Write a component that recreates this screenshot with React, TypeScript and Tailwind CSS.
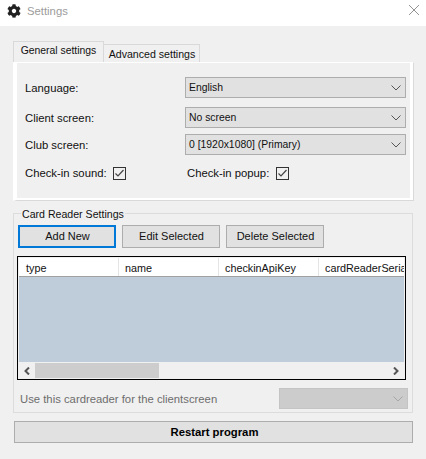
import { FaCog } from "react-icons/fa";

function Chevron({ className }: { className: string }) {
  return (
    <svg width="10" height="6" viewBox="0 0 10 6" fill="none" className={className}>
      <path d="M0.5 0.5L5 5L9.5 0.5" stroke="currentColor" strokeWidth="1" />
    </svg>
  );
}

function ComboBox({ value }: { value: string }) {
  return (
    <div className="flex h-[21px] w-[221px] items-center justify-between border border-[#adadad] bg-[#e1e1e1] pl-[3px] pr-[4px] text-[10.4px]">
      <span className="mt-px">{value}</span>
      <Chevron className="text-[#555555]" />
    </div>
  );
}

function CheckBox() {
  return (
    <span className="flex h-[13px] w-[13px] items-center justify-center border border-[#333333] bg-[#f0f0f0]">
      <svg width="11" height="11" viewBox="0 0 11 11" fill="none">
        <path d="M1.5 5.5L4 8L9.5 2" stroke="#444444" strokeWidth="1.2" />
      </svg>
    </span>
  );
}

function Button({ label, focused }: { label: string; focused?: boolean }) {
  return (
    <div
      className={`flex h-[23px] w-[98px] items-center justify-center bg-[#e1e1e1] pb-px pl-px text-[11px] ${
        focused ? "border-2 border-[#0078d7]" : "border border-[#adadad]"
      }`}
    >
      {label}
    </div>
  );
}

const columns = ["type", "name", "checkinApiKey", "cardReaderSerial"];

export default function App() {
  return (
    <div className="h-[459px] w-[426px] overflow-hidden bg-[#f0f0f0] text-[11.3px] leading-[14px] text-[#111111] [font-family:'Liberation_Sans',Arial,sans-serif]">
      <div className="flex h-[26px] items-center justify-between bg-white pb-[4px] pl-[7px] pr-[7px]">
        <div className="flex items-center gap-[6px]">
          <FaCog className="h-[14px] w-[14px] text-[#222222]" />
          <span className="text-[#9c9c9c]">Settings</span>
        </div>
        <svg width="10" height="10" viewBox="0 0 10 10" fill="none" className="mb-[2px]">
          <path d="M0 0L10 10M10 0L0 10" stroke="#777777" strokeWidth="0.8" />
        </svg>
      </div>

      <div className="px-[13px]">
        <div className="mt-[15px] flex h-[21px] items-end">
          <div className="relative z-10 flex h-[21px] w-[91px] items-center justify-center whitespace-nowrap border border-b-0 border-[#d9d9d9] bg-[#f0f0f0] pb-[2px] text-[10.4px]">
            General settings
          </div>
          <div className="flex h-[18px] w-[96px] items-center justify-center whitespace-nowrap border border-l-0 border-b-0 border-[#d9d9d9] bg-[#f0f0f0] pl-px text-[10.6px]">
            Advanced settings
          </div>
        </div>
        <div className="flex h-[139px] w-[401px] flex-col border-[#d9d9d9] border-r-[1px] border-b-[1px] border-l-[4px] border-l-white border-t-[1px] border-t-white pl-[8px] pr-[7px] pt-[14px] shadow-[inset_-3px_-2px_0_#ffffff]">
          <div className="mb-[9px] flex items-center justify-between">
            <span>Language:</span>
            <ComboBox value="English" />
          </div>
          <div className="mb-[6px] flex items-center justify-between">
            <span>Client screen:</span>
            <ComboBox value="No screen" />
          </div>
          <div className="flex items-center justify-between">
            <span>Club screen:</span>
            <ComboBox value="0 [1920x1080] (Primary)" />
          </div>
          <div className="mt-[11px] flex items-center">
            <span className="mb-px w-[88px]">Check-in sound:</span>
            <CheckBox />
            <span className="mb-px ml-[61px] w-[89px]">Check-in popup:</span>
            <CheckBox />
          </div>
        </div>

        <div className="relative mt-[12px] h-[200px] w-[400px] border border-[#dcdcdc] pl-[4px] pt-[11px]">
          <span className="absolute left-[7px] top-[-7px] bg-[#f0f0f0] px-[1px] text-[10.6px]">Card Reader Settings</span>
          <div className="flex gap-[6px]">
            <Button label="Add New" focused />
            <Button label="Edit Selected" />
            <Button label="Delete Selected" />
          </div>

          <div className="ml-[-1px] mt-[8px] h-[124px] w-[389px] border border-black p-px">
            <div className="flex h-[19px] border-b border-[#a0a0a0] bg-white">
              {columns.map((column) => (
                <div
                  key={column}
                  className="w-[100px] shrink-0 overflow-hidden whitespace-nowrap border-r border-[#e5e5e5] pl-[6px] pt-px text-[10.8px] leading-[18px] first:pl-[7px] last:w-[85px] last:border-r-0"
                >
                  {column}
                </div>
              ))}
            </div>
            <div className="h-[85px] bg-[#bfcddb]" />
            <div className="mt-px flex h-[15px] items-center bg-[#f0f0f0]">
              <div className="flex w-[16px] justify-center text-[#555555]">
                <svg width="6" height="8" viewBox="0 0 6 8" fill="none">
                  <path d="M5 0.5L1.5 4L5 7.5" stroke="currentColor" strokeWidth="2" />
                </svg>
              </div>
              <div className="h-[15px] w-[124px] bg-[#cdcdcd]" />
              <div className="ml-auto flex w-[17px] justify-center text-[#555555]">
                <svg width="6" height="8" viewBox="0 0 6 8" fill="none">
                  <path d="M1 0.5L4.5 4L1 7.5" stroke="currentColor" strokeWidth="2" />
                </svg>
              </div>
            </div>
          </div>

          <div className="mt-[8px] flex items-center justify-between pl-[2px] pr-[4px] text-[#6d6d6d]">
            <span>Use this cardreader for the clientscreen</span>
            <div className="flex h-[21px] w-[129px] items-center justify-end border border-[#c4c4c4] bg-[#cccccc] pr-[4px]">
              <Chevron className="text-[#a6a6a6]" />
            </div>
          </div>
        </div>
      </div>

      <div className="ml-[14px] mt-[8px] flex h-[22px] w-[399px] items-center justify-center border border-[#adadad] bg-[#e1e1e1] pb-px pl-[2px] font-bold text-black">
        Restart program
      </div>
    </div>
  );
}
